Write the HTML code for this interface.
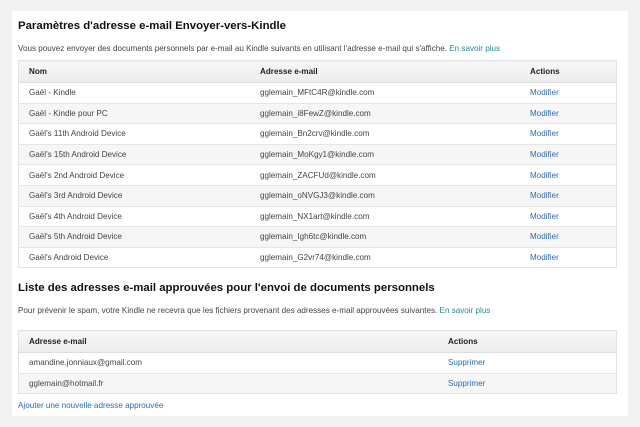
<!DOCTYPE html>
<html><head><meta charset="utf-8"><style>
body{margin:0;width:640px;height:427px;background:#f2f2f2;font-family:"Liberation Sans",Arial,sans-serif;color:#333;overflow:hidden}
.panel{position:absolute;left:12px;top:11px;width:616px;height:405px;background:#fff}
h2{position:absolute;left:18px;margin:0;font-size:11.4px;font-weight:bold;color:#111}
p{position:absolute;left:18px;margin:0;font-size:8.1px;color:#444}
a{color:#2d6bb0;text-decoration:none}
p a{color:#2a8a8c}
table{position:absolute;left:18px;width:599px;border-collapse:collapse;font-size:8.1px;border:1px solid #e3e3e3}
th{text-align:left;font-weight:bold;height:21px;padding:0 0 0 10px;background:linear-gradient(#f7f7f7,#ececec);color:#222;border-bottom:1px solid #ddd}
td{height:19.6px;padding:0 0 0 10px;border-top:1px solid #e6e6e6;color:#444}
tr:nth-child(odd) td{background:#f6f6f6}
</style></head><body>
<div class="panel"></div>
<h2 style="top:20px">Paramètres d'adresse e-mail Envoyer-vers-Kindle</h2>
<p style="top:44px">Vous pouvez envoyer des documents personnels par e-mail au Kindle suivants en utilisant l'adresse e-mail qui s'affiche. <a>En savoir plus</a></p>
<table style="top:60px">
<tr><th style="width:221px">Nom</th><th style="width:260px">Adresse e-mail</th><th>Actions</th></tr>
<tr><td>Gaël - Kindle</td><td>gglemain_MFtC4R@kindle.com</td><td><a>Modifier</a></td></tr>
<tr><td>Gaël - Kindle pour PC</td><td>gglemain_i8FewZ@kindle.com</td><td><a>Modifier</a></td></tr>
<tr><td>Gaël's 11th Android Device</td><td>gglemain_Bn2crv@kindle.com</td><td><a>Modifier</a></td></tr>
<tr><td>Gaël's 15th Android Device</td><td>gglemain_MoKgy1@kindle.com</td><td><a>Modifier</a></td></tr>
<tr><td>Gaël's 2nd Android Device</td><td>gglemain_ZACFUd@kindle.com</td><td><a>Modifier</a></td></tr>
<tr><td>Gaël's 3rd Android Device</td><td>gglemain_oNVGJ3@kindle.com</td><td><a>Modifier</a></td></tr>
<tr><td>Gaël's 4th Android Device</td><td>gglemain_NX1art@kindle.com</td><td><a>Modifier</a></td></tr>
<tr><td>Gaël's 5th Android Device</td><td>gglemain_Igh6tc@kindle.com</td><td><a>Modifier</a></td></tr>
<tr><td>Gaël's Android Device</td><td>gglemain_G2vr74@kindle.com</td><td><a>Modifier</a></td></tr>
</table>
<h2 style="top:282px">Liste des adresses e-mail approuvées pour l'envoi de documents personnels</h2>
<p style="top:306px">Pour prévenir le spam, votre Kindle ne recevra que les fichiers provenant des adresses e-mail approuvées suivantes. <a>En savoir plus</a></p>
<table style="top:330px">
<tr><th style="width:409px">Adresse e-mail</th><th>Actions</th></tr>
<tr><td>amandine.jonniaux@gmail.com</td><td><a>Supprimer</a></td></tr>
<tr><td>gglemain@hotmail.fr</td><td><a>Supprimer</a></td></tr>
</table>
<p style="top:401px"><a style="color:#2d6bb0">Ajouter une nouvelle adresse approuvée</a></p>
</body></html>
